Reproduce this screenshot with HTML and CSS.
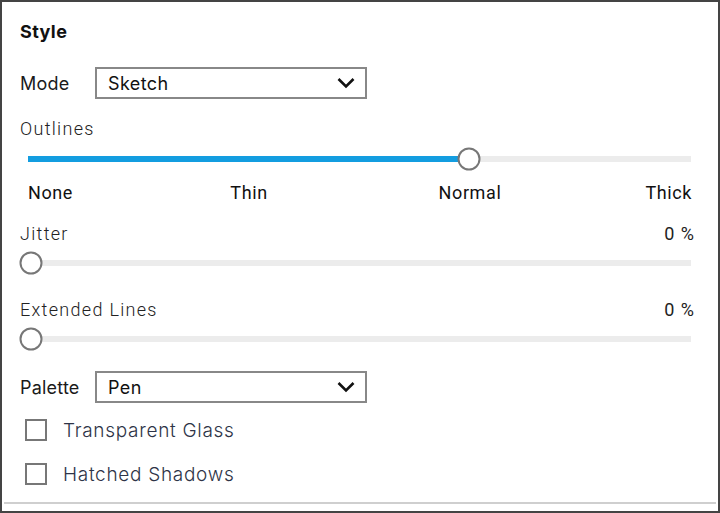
FILE: index.html
```html
<!DOCTYPE html>
<html>
<head>
<meta charset="utf-8">
<link rel="stylesheet" href="styles.css">
</head>
<body>
<div class="panel">
  <div class="content">
    <h2 class="title">Style</h2>
    <div class="select-row mode-row">
      <span class="select-label">Mode</span>
      <div class="select">
        <span class="select-value">Sketch</span>
        <svg class="chevron" width="18" height="12" viewBox="0 0 18 12"><path d="M1.5 2 L9 9.5 L16.5 2" fill="none" stroke="#111" stroke-width="2.6" stroke-linejoin="miter"/></svg>
      </div>
    </div>

    <div class="slider-label outlines-label"><span>Outlines</span></div>
    <div class="slider outlines-slider">
      <div class="track">
        <div class="fill" style="width: 441px"></div>
        <div class="thumb" style="left: 441px"></div>
      </div>
    </div>
    <div class="ticks">
      <span class="tick t-none">None</span>
      <span class="tick t-thin">Thin</span>
      <span class="tick t-normal">Normal</span>
      <span class="tick t-thick">Thick</span>
    </div>

    <div class="slider-label jitter-label"><span>Jitter</span><span class="pct">0 %</span></div>
    <div class="slider">
      <div class="track">
        <div class="thumb" style="left: 3px"></div>
      </div>
    </div>

    <div class="slider-label ext-label"><span>Extended Lines</span><span class="pct">0 %</span></div>
    <div class="slider">
      <div class="track">
        <div class="thumb" style="left: 3px"></div>
      </div>
    </div>

    <div class="select-row palette-row">
      <span class="select-label">Palette</span>
      <div class="select">
        <span class="select-value">Pen</span>
        <svg class="chevron" width="18" height="12" viewBox="0 0 18 12"><path d="M1.5 2 L9 9.5 L16.5 2" fill="none" stroke="#111" stroke-width="2.6" stroke-linejoin="miter"/></svg>
      </div>
    </div>

    <label class="check check-first"><span class="box"></span><span class="check-text">Transparent Glass</span></label>
    <label class="check check-second"><span class="box"></span><span class="check-text">Hatched Shadows</span></label>
  </div>
  <div class="separator"></div>
</div>
</body>
</html>
```

FILE: styles.css
```css
html, body {
  margin: 0;
  padding: 0;
  background: #fff;
}
.panel {
  width: 720px;
  height: 513px;
  box-sizing: border-box;
  border: 2px solid #444;
  display: flex;
  flex-direction: column;
  font-family: Inter, "Noto Sans", sans-serif;
  color: #222;
}
.content {
  display: flex;
  flex-direction: column;
  padding: 15px 24px 0 18px;
}
.title {
  margin: 0;
  font-size: 18px;
  font-weight: 700;
  letter-spacing: 0.4px;
  line-height: 30px;
  color: #111;
}
.select-row {
  display: flex;
  align-items: center;
  height: 32px;
}
.mode-row { margin-top: 20px; }
.palette-row { margin-top: 20px; }
.select-label {
  width: 75px;
  font-size: 18px;
  font-weight: 400;
  letter-spacing: 0.2px;
  color: #1a1a1a;
}
.select {
  width: 272px;
  height: 32px;
  box-sizing: border-box;
  border: 2px solid #888;
  display: flex;
  align-items: center;
  justify-content: space-between;
  padding: 0 10px 0 11px;
}
.select-value {
  font-size: 18px;
  letter-spacing: 0.4px;
  color: #111;
}
.chevron { display: block; }
.slider-label {
  display: flex;
  justify-content: space-between;
  align-items: center;
  height: 24px;
  font-family: Roboto, "Liberation Sans", sans-serif;
  font-weight: 300;
  font-size: 18px;
  letter-spacing: 1.3px;
  color: #222;
}
.slider-label .pct {
  font-weight: 400;
  font-size: 18px;
  letter-spacing: 1px;
  margin-right: -1px;
}
.outlines-label { margin-top: 17px; }
.jitter-label { margin-top: 17px; }
.ext-label { margin-top: 22px; }
.slider {
  margin-top: 6px;
  height: 24px;
  display: flex;
  align-items: center;
  padding: 0 3px 0 8px;
}
.outlines-slider { margin-top: 7px; }
.track {
  position: relative;
  flex: 1;
  height: 6px;
  background: #ececec;
}
.fill {
  height: 6px;
  background: #139de0;
}
.thumb {
  position: absolute;
  top: 50%;
  width: 23px;
  height: 23px;
  box-sizing: border-box;
  border: 2px solid #777;
  border-radius: 50%;
  background: #fff;
  transform: translate(-50%, -50%);
}
.ticks {
  margin-top: 9px;
  height: 24px;
  display: grid;
  grid-template-columns: repeat(6, 1fr);
  align-items: center;
  padding: 0 3px 0 8px;
  font-family: Roboto, "Liberation Sans", sans-serif;
  font-size: 18px;
  letter-spacing: 0.6px;
  color: #111;
}
.t-none { grid-column: 1 / 2; justify-self: start; }
.t-thin { grid-column: 2 / 4; justify-self: center; }
.t-normal { grid-column: 4 / 6; justify-self: center; }
.t-thick { grid-column: 6 / 7; justify-self: end; margin-right: -1px; }
.check {
  display: flex;
  align-items: center;
  height: 24px;
  padding-left: 5px;
}
.check-first { margin-top: 15px; }
.check-second { margin-top: 20px; }
.box {
  width: 22px;
  height: 22px;
  box-sizing: border-box;
  border: 2px solid #777;
  margin-right: 16px;
}
.check-text {
  font-size: 19px;
  font-weight: 300;
  letter-spacing: 0.7px;
  color: #2e3447;
}
.separator {
  margin: auto 2px 7px 2px;
  height: 2px;
  background: #cfcfcf;
}
```
